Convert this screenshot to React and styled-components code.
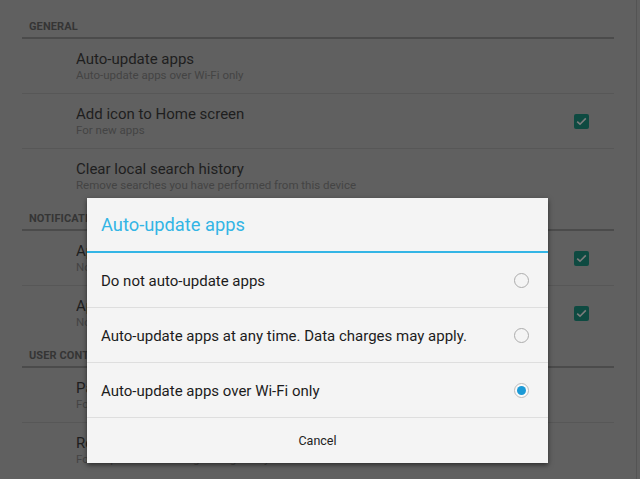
import React from "react";
import styled, { createGlobalStyle } from "styled-components";

const Global = createGlobalStyle`
  html, body { margin: 0; padding: 0; background: #606060; overflow: hidden; }
  body { font-family: Roboto, "Noto Sans", "Liberation Sans", sans-serif; }
  #root { width: 640px; height: 479px; }
`;

const Screen = styled.div`
  position: relative;
  width: 640px;
  height: 479px;
  display: flex;
  background: #606060;
  overflow: hidden;
`;

const Page = styled.div`
  flex: 1;
  padding: 11px 22px 0 22px;
  display: flex;
  flex-direction: column;
`;

const Edge = styled.div`
  width: 3px;
  border-left: 1px solid #545454;
`;

const Section = styled.section`
  display: flex;
  flex-direction: column;
`;

const Header = styled.div`
  height: 22px;
  padding-top: 4px;
  display: flex;
  align-items: center;
  padding-left: 7px;
  border-bottom: 2px solid #4b4b4b;
  font-size: 11px;
  font-weight: 700;
  color: #353535;
  letter-spacing: 0.1px;
`;

const Row = styled.div`
  height: 54px;
  display: flex;
  align-items: center;
  padding: 0 25px 0 54px;
  border-bottom: ${(p) => (p.$last ? "none" : "1px solid #575757")};
`;

const Texts = styled.div`
  flex: 1;
  display: flex;
  flex-direction: column;
  white-space: nowrap;
  overflow: hidden;
`;

const Title = styled.div`
  font-size: 15px;
  line-height: 18px;
  color: #1e1e1e;
`;

const Sub = styled.div`
  font-size: 11.5px;
  line-height: 14px;
  color: #444;
`;

const Check = styled.div`
  width: 15px;
  height: 15px;
  border-radius: 2px;
  background: #0e4a41;
  display: flex;
  align-items: center;
  justify-content: center;
`;

const Overlay = styled.div`
  position: absolute;
  left: 87px;
  top: 198px;
  width: 461px;
  background: #f4f4f4;
  box-shadow: 0 2px 5px rgba(0, 0, 0, 0.55);
  display: flex;
  flex-direction: column;
`;

const DialogTitle = styled.div`
  height: 53px;
  display: flex;
  align-items: center;
  padding-left: 14px;
  font-size: 18.3px;
  color: #33b5e5;
  border-bottom: 2px solid #33b5e5;
`;

const Option = styled.div`
  height: 53px;
  display: flex;
  align-items: center;
  padding: 1px 19px 0 14px;
  border-bottom: 1px solid #dedede;
  font-size: 15px;
  color: #1c1c1c;
`;

const OptionText = styled.div`
  flex: 1;
`;

const Radio = styled.div`
  width: 15px;
  height: 15px;
  box-sizing: border-box;
  border-radius: 50%;
  border: 1.5px solid ${(p) => (p.$on ? "#bcbcbc" : "#acacac")};
  background: ${(p) => (p.$on ? "#fafafa" : "transparent")};
  display: flex;
  align-items: center;
  justify-content: center;
`;

const Dot = styled.div`
  width: 9px;
  height: 9px;
  border-radius: 50%;
  background: #1c9ad6;
`;

const CancelBar = styled.div`
  height: 45px;
  display: flex;
  align-items: center;
  justify-content: center;
  font-size: 12.5px;
  color: #222;
`;

const CheckIcon = () => (
  <Check>
    <svg width="11" height="9" viewBox="0 0 11 9">
      <path d="M1.2 4.6 L4 7.2 L9.8 1.4" fill="none" stroke="#7c7c7c" strokeWidth="1.6" />
    </svg>
  </Check>
);

const sections = [
  {
    name: "GENERAL",
    rows: [
      { t: "Auto-update apps", s: "Auto-update apps over Wi-Fi only" },
      { t: "Add icon to Home screen", s: "For new apps", c: true },
      { t: "Clear local search history", s: "Remove searches you have performed from this device" },
    ],
  },
  {
    name: "NOTIFICATIONS",
    rows: [
      { t: "App updates available", s: "Notify when updates are available for apps", c: true },
      { t: "Apps were auto-updated", s: "Notify when apps are automatically updated", c: true },
    ],
  },
  {
    name: "USER CONTROLS",
    rows: [
      { t: "Parental controls", s: "For content downloaded from Google Play" },
      { t: "Require password for purchases", s: "For all purchases through Google Play on this device" },
    ],
  },
];

const options = [
  "Do not auto-update apps",
  "Auto-update apps at any time. Data charges may apply.",
  "Auto-update apps over Wi-Fi only",
];

export default function App() {
  return (
    <>
      <Global />
      <Screen>
        <Page>
          {sections.map((sec) => (
            <Section key={sec.name}>
              <Header>{sec.name}</Header>
              {sec.rows.map((r, i) => (
                <Row key={r.t} $last={i === sec.rows.length - 1}>
                  <Texts>
                    <Title>{r.t}</Title>
                    <Sub>{r.s}</Sub>
                  </Texts>
                  {r.c && <CheckIcon />}
                </Row>
              ))}
            </Section>
          ))}
        </Page>
        <Edge />
        <Overlay>
          <DialogTitle>Auto-update apps</DialogTitle>
          {options.map((o, i) => (
            <Option key={o}>
              <OptionText>{o}</OptionText>
              <Radio $on={i === 2}>{i === 2 && <Dot />}</Radio>
            </Option>
          ))}
          <CancelBar>Cancel</CancelBar>
        </Overlay>
      </Screen>
    </>
  );
}
